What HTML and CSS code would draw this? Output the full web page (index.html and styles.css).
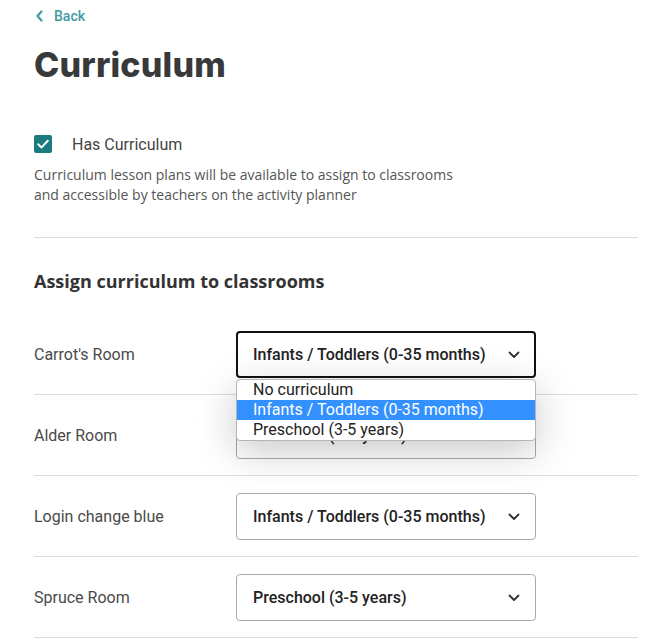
FILE: index.html
```html
<!DOCTYPE html>
<html>
<head>
<meta charset="utf-8">
<link rel="stylesheet" href="styles.css">
</head>
<body>
<div class="page">
  <a class="back" href="#">
    <svg class="back-icon" width="9" height="12" viewBox="0 0 9 12"><path d="M6.5 1.5 L2.5 6 L6.5 10.5" fill="none" stroke="#3f9ba1" stroke-width="2.2" stroke-linecap="round" stroke-linejoin="round"/></svg>
    <span>Back</span>
  </a>
  <h1 class="title">Curriculum</h1>

  <label class="check-row">
    <span class="checkbox">
      <svg width="18" height="18" viewBox="0 0 18 18"><path d="M4.2 9.2 L7.6 12.4 L13.8 5.8" fill="none" stroke="#fff" stroke-width="2" stroke-linecap="round" stroke-linejoin="round"/></svg>
    </span>
    <span class="check-label">Has Curriculum</span>
  </label>
  <p class="desc">Curriculum lesson plans will be available to assign to classrooms<br>and accessible by teachers on the activity planner</p>

  <div class="divider"></div>

  <h2 class="subtitle">Assign curriculum to classrooms</h2>

  <div class="rows">
    <div class="row">
      <div class="row-label">Carrot's Room</div>
      <div class="select-wrap">
        <div class="select focused"><span>Infants / Toddlers (0-35 months)</span>
          <svg class="chev" width="12" height="8" viewBox="0 0 12 8"><path d="M1.5 1.5 L6 6 L10.5 1.5" fill="none" stroke="#333" stroke-width="1.8" stroke-linecap="round" stroke-linejoin="round"/></svg>
        </div>
        <ul class="dropdown">
          <li>No curriculum</li>
          <li class="active">Infants / Toddlers (0-35 months)</li>
          <li>Preschool (3-5 years)</li>
        </ul>
      </div>
    </div>
    <div class="row">
      <div class="row-label">Alder Room</div>
      <div class="select-wrap">
        <div class="select"><span>Preschool (3-5 years)</span>
          <svg class="chev" width="12" height="8" viewBox="0 0 12 8"><path d="M1.5 1.5 L6 6 L10.5 1.5" fill="none" stroke="#333" stroke-width="1.8" stroke-linecap="round" stroke-linejoin="round"/></svg>
        </div>
      </div>
    </div>
    <div class="row">
      <div class="row-label">Login change blue</div>
      <div class="select-wrap">
        <div class="select"><span>Infants / Toddlers (0-35 months)</span>
          <svg class="chev" width="12" height="8" viewBox="0 0 12 8"><path d="M1.5 1.5 L6 6 L10.5 1.5" fill="none" stroke="#333" stroke-width="1.8" stroke-linecap="round" stroke-linejoin="round"/></svg>
        </div>
      </div>
    </div>
    <div class="row">
      <div class="row-label">Spruce Room</div>
      <div class="select-wrap">
        <div class="select"><span>Preschool (3-5 years)</span>
          <svg class="chev" width="12" height="8" viewBox="0 0 12 8"><path d="M1.5 1.5 L6 6 L10.5 1.5" fill="none" stroke="#333" stroke-width="1.8" stroke-linecap="round" stroke-linejoin="round"/></svg>
        </div>
      </div>
    </div>
  </div>
</div>
</body>
</html>
```
FILE: styles.css
```css
html, body {
  margin: 0;
  padding: 0;
  background: #fff;
}
body {
  font-family: Roboto, "Liberation Sans", sans-serif;
  color: #333;
}
.page {
  padding: 0 24px 0 34px;
}
.back {
  display: flex;
  align-items: center;
  height: 32px;
  text-decoration: none;
  color: #3f9ba1;
  font-family: Roboto, sans-serif;
  font-weight: 500;
  font-size: 14px;
}
.back-icon {
  margin-left: 1px;
  margin-right: 10px;
}
.title {
  margin: 11px 0 0 0;
  font-family: Inter, sans-serif;
  font-weight: 800;
  font-size: 34px;
  line-height: 44px;
  color: #38393b;
  letter-spacing: 0.2px;
}
.check-row {
  display: flex;
  align-items: center;
  margin-top: 47px;
  height: 20px;
}
.checkbox {
  width: 18px;
  height: 18px;
  border-radius: 2px;
  background: #1b7c80;
  display: flex;
}
.check-label {
  margin-left: 20px;
  font-size: 16px;
  color: #444;
}
.desc {
  margin: 11px 0 0 0;
  font-family: "Open Sans", sans-serif;
  font-size: 14px;
  line-height: 20px;
  color: #555;
}
.divider {
  margin-top: 32px;
  height: 1px;
  background: #ddd;
}
.subtitle {
  margin: 32px 0 0 0;
  font-family: "Open Sans", sans-serif;
  font-weight: 700;
  font-size: 18px;
  line-height: 22px;
  color: #333;
}
.rows {
  margin-top: 22px;
}
.row {
  display: flex;
  align-items: center;
  padding: 17px 0 16px 0;
  border-bottom: 1px solid #ddd;
}
.row-label {
  width: 202px;
  font-size: 16px;
  color: #4a4a4a;
}
.select-wrap {
  position: relative;
  width: 300px;
}
.select {
  box-sizing: border-box;
  height: 47px;
  display: flex;
  align-items: center;
  justify-content: space-between;
  padding: 0 15px 0 16px;
  border: 1px solid #aaa;
  border-radius: 4px;
  font-size: 16px;
  font-weight: 500;
  color: #222;
  background: #fff;
}
.select.focused {
  border: 2px solid #111;
  padding: 0 14px 0 15px;
}
.dropdown {
  position: absolute;
  left: 0;
  top: 48px;
  width: 300px;
  box-sizing: border-box;
  margin: 0;
  padding: 0;
  list-style: none;
  background: #fff;
  border: 1px solid #b5b5b5;
  border-radius: 4px;
  box-shadow: 0 10px 40px rgba(0,0,0,0.22);
  z-index: 5;
  overflow: hidden;
}
.dropdown li {
  height: 20px;
  line-height: 20px;
  padding-left: 16px;
  font-size: 16px;
  color: #222;
}
.dropdown li.active {
  background: #3390ff;
  color: #fff;
}
```
